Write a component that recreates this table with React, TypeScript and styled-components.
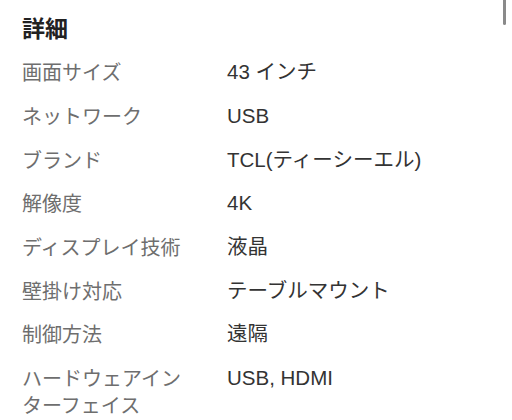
import React from "react";
import styled, { createGlobalStyle } from "styled-components";

const GlobalStyle = createGlobalStyle`
  html, body {
    margin: 0;
    padding: 0;
    background: #ffffff;
  }
  body {
    font-family: "Liberation Sans", "Noto Sans CJK JP", sans-serif;
    -webkit-font-smoothing: antialiased;
  }
`;

const Page = styled.div`
  position: relative;
  width: 512px;
  height: 420px;
  overflow: hidden;
  background: #fff;
  padding: 12px 0 0 22px;
  box-sizing: border-box;
`;

const Title = styled.h2`
  margin: 0 0 8px 0;
  font-family: "Noto Sans CJK JP", sans-serif;
  font-size: 23px;
  font-weight: 700;
  line-height: 30px;
  color: #222;
`;

const List = styled.dl`
  margin: 0;
  display: grid;
  grid-template-columns: 205px 1fr;
`;

const Label = styled.dt`
  margin: 0;
  padding: 8.35px 0;
  font-family: "Noto Sans CJK JP", sans-serif;
  font-size: 20px;
  line-height: 27px;
  color: #6e6e6e;
  width: 170px;
`;

const Value = styled.dd`
  margin: 0;
  padding: 8.35px 0;
  font-family: "Liberation Sans", "Noto Sans CJK JP", sans-serif;
  font-size: 20.5px;
  line-height: 27px;
  color: #333;
`;

const Scrollbar = styled.div`
  position: absolute;
  top: 0;
  right: 6px;
  width: 3px;
  height: 25px;
  border-radius: 0 0 2px 2px;
  background: #8a8a8a;
`;

const rows: [string, string][] = [
  ["画面サイズ", "43 インチ"],
  ["ネットワーク", "USB"],
  ["ブランド", "TCL(ティーシーエル)"],
  ["解像度", "4K"],
  ["ディスプレイ技術", "液晶"],
  ["壁掛け対応", "テーブルマウント"],
  ["制御方法", "遠隔"],
  ["ハードウェアインターフェイス", "USB, HDMI"],
];

export default function App() {
  return (
    <>
      <GlobalStyle />
      <Page>
        <Title>詳細</Title>
        <List>
          {rows.map(([k, v]) => (
            <React.Fragment key={k}>
              <Label>{k}</Label>
              <Value>{v}</Value>
            </React.Fragment>
          ))}
        </List>
        <Scrollbar />
      </Page>
    </>
  );
}
